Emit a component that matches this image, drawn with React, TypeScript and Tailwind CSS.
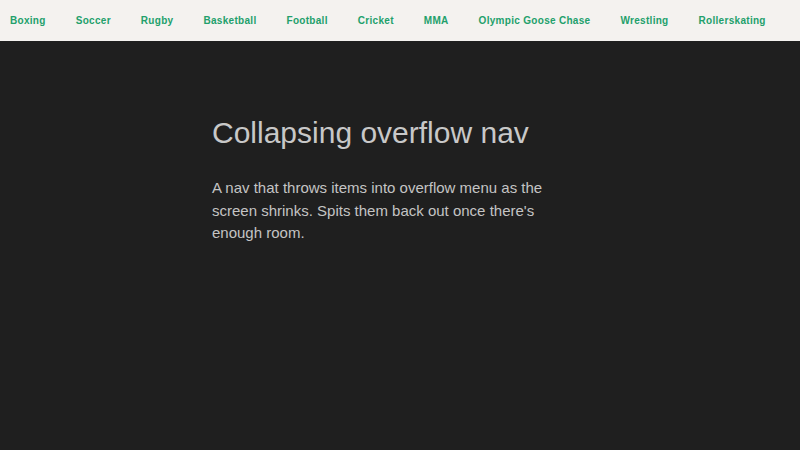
const sports = [
  "Boxing",
  "Soccer",
  "Rugby",
  "Basketball",
  "Football",
  "Cricket",
  "MMA",
  "Olympic Goose Chase",
  "Wrestling",
  "Rollerskating",
]

export default function App() {
  return (
    <div className="min-h-[450px] bg-[#1f1f1f] font-['Liberation_Sans',Arial,sans-serif]">
      {/* top nav */}
      <nav className="h-[41px] bg-[#f4f2ef] flex items-center px-[10px] gap-[30px]">
        {sports.map((s) => (
          <a
            key={s}
            href="#"
            className="text-[10px] font-bold tracking-[0.3px] text-[#22a06b] whitespace-nowrap"
          >
            {s}
          </a>
        ))}
      </nav>

      <main className="mx-auto w-[376px] pt-[74px]">
        <h1 className="text-[30px] leading-[36px] text-[#c8c8c8]">Collapsing overflow nav</h1>
        <p className="mt-[26px] text-[15px] leading-[22.5px] text-[#c4c4c4]">
          A nav that throws items into overflow menu as the screen shrinks. Spits them back out
          once there's enough room.
        </p>
      </main>
    </div>
  )
}
